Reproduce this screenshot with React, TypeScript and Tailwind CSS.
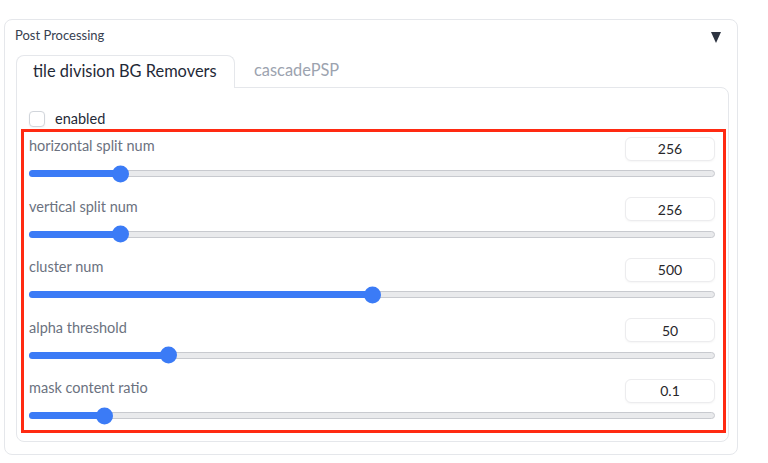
import { useState } from "react";

type Setting = {
  label: string;
  value: string;
  fraction: number;
};

const settings: Setting[] = [
  { label: "horizontal split num", value: "256", fraction: 0.125 },
  { label: "vertical split num", value: "256", fraction: 0.125 },
  { label: "cluster num", value: "500", fraction: 0.5 },
  { label: "alpha threshold", value: "50", fraction: 50 / 255 },
  { label: "mask content ratio", value: "0.1", fraction: 0.1 },
];

function Slider({ fraction }: { fraction: number }) {
  return (
    <div className="relative mt-[9.5px] h-[7px] w-full">
      <div className="absolute inset-0 rounded-full border border-[#c8cacf] bg-[#e9eaec]" />
      <div
        className="absolute left-0 top-0 h-full rounded-full bg-[#3b7bf6]"
        style={{ width: `calc(${fraction} * (100% - 16px) + 8px)` }}
      />
      <div
        className="absolute top-1/2 h-[17px] w-[17px] -translate-y-1/2 rounded-full bg-[#3b7bf6]"
        style={{ left: `calc(${fraction} * (100% - 16px) - 0.5px)` }}
      />
    </div>
  );
}

function SettingRow({ s }: { s: Setting }) {
  return (
    <div className="flex flex-col">
      <div className="flex h-6 items-center justify-between">
        <span className="-mt-[5px] text-[14.5px] text-[#6b7280]">{s.label}</span>
        <div className="flex h-6 w-[90px] items-center justify-center rounded-md border border-[#ececee] bg-white text-[14px] text-[#27272a] shadow-[0_1px_2px_rgba(0,0,0,0.04)]">
          {s.value}
        </div>
      </div>
      <Slider fraction={s.fraction} />
    </div>
  );
}

export default function App() {
  const [tab, setTab] = useState(0);
  const [enabled, setEnabled] = useState(false);

  return (
    <div className="h-[463px] w-[768px] bg-white pl-[4px] pt-[19px] font-['Lato',sans-serif]">
      <div className="h-[436px] w-[734px] rounded-lg border border-[#e5e7eb] bg-white px-[10px] pt-[6px]">
        <div className="flex items-center justify-between pr-[6px]">
          <span className="text-[13px] text-[#374151]">Post Processing</span>
          <svg width="10" height="11" viewBox="0 0 10 11" className="mt-[3px]">
            <polygon points="0,0 10,0 5,11" fill="#2d3441" />
          </svg>
        </div>

        <div className="mt-[9px] flex pl-[1px]">
          <div
            onClick={() => setTab(0)}
            className={
              tab === 0
                ? "relative z-10 -mb-px flex h-[33px] w-[219px] cursor-pointer items-center rounded-t-lg border border-b-0 border-[#e5e7eb] bg-white text-[16.4px] text-[#1f2937]"
                : "flex h-[32px] w-[219px] cursor-pointer items-center text-[16.4px] text-[#9ca3af]"
            }
          >
            <span className="pl-[16px]">tile division BG Removers</span>
          </div>
          <div
            onClick={() => setTab(1)}
            className={
              tab === 1
                ? "relative z-10 -mb-px flex h-[33px] cursor-pointer items-center rounded-t-lg border border-b-0 border-[#e5e7eb] bg-white text-[16.4px] text-[#1f2937]"
                : "flex h-[32px] cursor-pointer items-center text-[16.4px] text-[#9ca3af]"
            }
          >
            <span className="px-[19px]">cascadePSP</span>
          </div>
        </div>

        <div className="ml-[1px] h-[355px] w-[713px] rounded-b-lg rounded-tr-lg border border-[#e5e7eb] bg-white pt-[23px]">
          <label className="flex h-4 cursor-pointer items-center gap-[10px] pl-[12px]">
            <input
              type="checkbox"
              checked={enabled}
              onChange={(e) => setEnabled(e.target.checked)}
              className="h-4 w-4 appearance-none rounded-[4px] border border-[#d1d5db] bg-white shadow-[0_1px_2px_rgba(0,0,0,0.05)] checked:border-[#3b7bf6] checked:bg-[#3b7bf6]"
            />
            <span className="text-[14.5px] text-[#1f2937]">enabled</span>
          </label>

          <div className="ml-[4px] mr-[2px] mt-[2px] flex flex-col gap-[20px] border-[3px] border-[#ff2a12] pb-[10.5px] pl-[5px] pr-[8px] pt-[5px]">
            {settings.map((s) => (
              <SettingRow key={s.label} s={s} />
            ))}
          </div>
        </div>
      </div>
    </div>
  );
}
